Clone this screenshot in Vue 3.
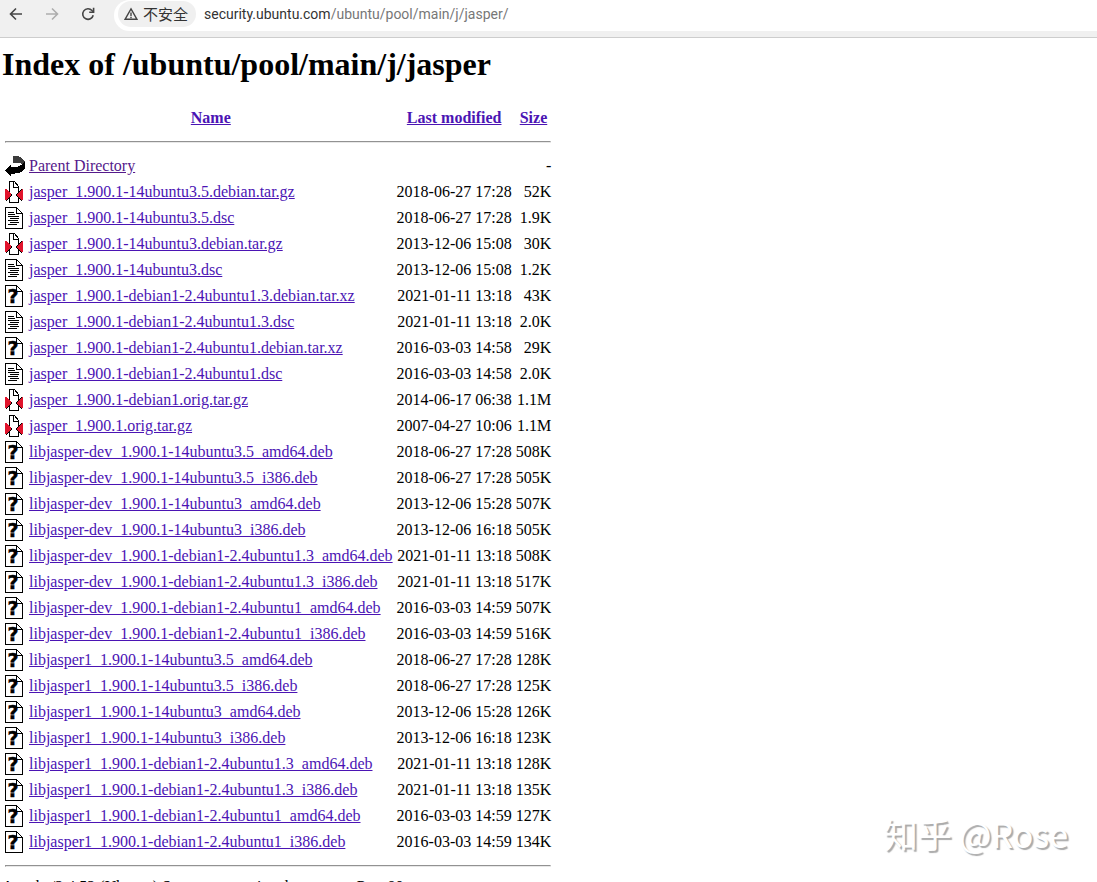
<template>
  <div class="browser">
    <header class="toolbar">
      <button class="nav-btn" type="button" aria-label="Back">
        <svg width="16" height="16" viewBox="0 0 16 16"><path d="M14 8H3M8 2.5L2.5 8L8 13.5" /></svg>
      </button>
      <button class="nav-btn disabled" type="button" aria-label="Forward">
        <svg width="16" height="16" viewBox="0 0 16 16"><path d="M2 8H13M8 2.5L13.5 8L8 13.5" /></svg>
      </button>
      <button class="nav-btn" type="button" aria-label="Reload">
        <svg width="16" height="16" viewBox="0 0 16 16">
          <path d="M13.2 9.2A5.3 5.3 0 1 1 12 4.5L13.5 6" />
          <path d="M13.6 1.8V6.2H9.2" />
        </svg>
      </button>
      <div class="address-bar">
        <button class="security" type="button">
          <svg width="14" height="14" viewBox="0 0 14 14">
            <path d="M7 1.8L13 12.3H1Z" />
            <path d="M7 5.4V9M7 9.8V11.2" />
          </svg>
          <span>不安全</span>
        </button>
        <div class="url"><span class="host">security.ubuntu.com</span>/ubuntu/pool/main/j/jasper/</div>
      </div>
    </header>

    <main class="page">
      <h1>Index of /ubuntu/pool/main/j/jasper</h1>
      <table>
        <thead>
          <tr>
            <th class="icon"></th>
            <th><a href="#">Name</a></th>
            <th><a href="#">Last modified</a></th>
            <th><a href="#">Size</a></th>
          </tr>
          <tr>
            <td colspan="4"><hr /></td>
          </tr>
        </thead>
        <tbody>
          <tr v-for="file in files" :key="file.name">
            <td class="icon">
              <!-- parent directory -->
              <svg v-if="file.type === 'back'" width="20" height="22" viewBox="0 0 20 22">
                <path class="back-top" d="M8 1H13L17 3L20 7V10L17 9L14 8H8Z" />
                <path class="solid" d="M20 7V13L18 16L14 18L6 19V21H5L0 16V15L5 10H6V12H12L16 10L18 8Z" />
              </svg>
              <!-- compressed archive -->
              <svg v-else-if="file.type === 'gz'" width="20" height="22" viewBox="0 0 20 22">
                <path class="sheet" d="M4.5 0.5H9.5L13.5 5.5V21.5H4.5Z" />
                <path class="fold" d="M8.5 0.5V6.5H13.5" />
                <path class="solid" d="M1 8L7 13V15L1 20ZM17 8L11 13V15L17 20Z" />
                <path class="red" d="M0 8H1L6 13V15L1 19H0ZM18 8H17L12 13V15L17 19H18Z" />
              </svg>
              <!-- text file or unknown file -->
              <svg v-else width="20" height="22" viewBox="0 0 20 22">
                <path class="sheet" d="M0.5 0.5H11.5L17.5 6.5V21.5H0.5Z" />
                <path class="fold" d="M11.5 0.5V6.5H17.5" />
                <path v-if="file.type === 'text'" class="lines"
                  d="M3 5.5H9M3 7.5H10M3 9.5H14M5 11.5H14M3 13.5H13M5 15.5H14M3 17.5H12" />
                <text v-else x="8" y="18" text-anchor="middle">?</text>
              </svg>
            </td>
            <td><a href="#" :class="{ parent: file.type === 'back' }">{{ file.name }}</a></td>
            <td class="right">{{ file.modified }}</td>
            <td class="right">{{ file.size }}</td>
          </tr>
        </tbody>
        <tfoot>
          <tr>
            <td colspan="4"><hr /></td>
          </tr>
        </tfoot>
      </table>
      <address>Apache/2.4.52 (Ubuntu) Server at security.ubuntu.com Port 80</address>
    </main>

    <div class="watermark">知乎 @Rose</div>
  </div>
</template>

<script setup>
// Directory listing entries
const files = [
  { type: 'back', name: 'Parent Directory', modified: '', size: '-' },
  { type: 'gz', name: 'jasper_1.900.1-14ubuntu3.5.debian.tar.gz', modified: '2018-06-27 17:28', size: '52K' },
  { type: 'text', name: 'jasper_1.900.1-14ubuntu3.5.dsc', modified: '2018-06-27 17:28', size: '1.9K' },
  { type: 'gz', name: 'jasper_1.900.1-14ubuntu3.debian.tar.gz', modified: '2013-12-06 15:08', size: '30K' },
  { type: 'text', name: 'jasper_1.900.1-14ubuntu3.dsc', modified: '2013-12-06 15:08', size: '1.2K' },
  { type: 'unknown', name: 'jasper_1.900.1-debian1-2.4ubuntu1.3.debian.tar.xz', modified: '2021-01-11 13:18', size: '43K' },
  { type: 'text', name: 'jasper_1.900.1-debian1-2.4ubuntu1.3.dsc', modified: '2021-01-11 13:18', size: '2.0K' },
  { type: 'unknown', name: 'jasper_1.900.1-debian1-2.4ubuntu1.debian.tar.xz', modified: '2016-03-03 14:58', size: '29K' },
  { type: 'text', name: 'jasper_1.900.1-debian1-2.4ubuntu1.dsc', modified: '2016-03-03 14:58', size: '2.0K' },
  { type: 'gz', name: 'jasper_1.900.1-debian1.orig.tar.gz', modified: '2014-06-17 06:38', size: '1.1M' },
  { type: 'gz', name: 'jasper_1.900.1.orig.tar.gz', modified: '2007-04-27 10:06', size: '1.1M' },
  { type: 'unknown', name: 'libjasper-dev_1.900.1-14ubuntu3.5_amd64.deb', modified: '2018-06-27 17:28', size: '508K' },
  { type: 'unknown', name: 'libjasper-dev_1.900.1-14ubuntu3.5_i386.deb', modified: '2018-06-27 17:28', size: '505K' },
  { type: 'unknown', name: 'libjasper-dev_1.900.1-14ubuntu3_amd64.deb', modified: '2013-12-06 15:28', size: '507K' },
  { type: 'unknown', name: 'libjasper-dev_1.900.1-14ubuntu3_i386.deb', modified: '2013-12-06 16:18', size: '505K' },
  { type: 'unknown', name: 'libjasper-dev_1.900.1-debian1-2.4ubuntu1.3_amd64.deb', modified: '2021-01-11 13:18', size: '508K' },
  { type: 'unknown', name: 'libjasper-dev_1.900.1-debian1-2.4ubuntu1.3_i386.deb', modified: '2021-01-11 13:18', size: '517K' },
  { type: 'unknown', name: 'libjasper-dev_1.900.1-debian1-2.4ubuntu1_amd64.deb', modified: '2016-03-03 14:59', size: '507K' },
  { type: 'unknown', name: 'libjasper-dev_1.900.1-debian1-2.4ubuntu1_i386.deb', modified: '2016-03-03 14:59', size: '516K' },
  { type: 'unknown', name: 'libjasper1_1.900.1-14ubuntu3.5_amd64.deb', modified: '2018-06-27 17:28', size: '128K' },
  { type: 'unknown', name: 'libjasper1_1.900.1-14ubuntu3.5_i386.deb', modified: '2018-06-27 17:28', size: '125K' },
  { type: 'unknown', name: 'libjasper1_1.900.1-14ubuntu3_amd64.deb', modified: '2013-12-06 15:28', size: '126K' },
  { type: 'unknown', name: 'libjasper1_1.900.1-14ubuntu3_i386.deb', modified: '2013-12-06 16:18', size: '123K' },
  { type: 'unknown', name: 'libjasper1_1.900.1-debian1-2.4ubuntu1.3_amd64.deb', modified: '2021-01-11 13:18', size: '128K' },
  { type: 'unknown', name: 'libjasper1_1.900.1-debian1-2.4ubuntu1.3_i386.deb', modified: '2021-01-11 13:18', size: '135K' },
  { type: 'unknown', name: 'libjasper1_1.900.1-debian1-2.4ubuntu1_amd64.deb', modified: '2016-03-03 14:59', size: '127K' },
  { type: 'unknown', name: 'libjasper1_1.900.1-debian1-2.4ubuntu1_i386.deb', modified: '2016-03-03 14:59', size: '134K' },
];
</script>

<style>
body {
  margin: 0;
  background: #fff;
}
</style>

<style scoped>
.browser {
  position: relative;
  height: 100vh;
  overflow: hidden;
  font-family: "Liberation Serif", "Times New Roman", serif;
  font-size: 16px;
  line-height: 18px;
  color: #000;
}

.toolbar {
  display: flex;
  align-items: flex-start;
  gap: 20px;
  box-sizing: border-box;
  height: 38px;
  padding-left: 8px;
  background: #f0f0f0;
  border-bottom: 1px solid #cdcdcd;
}

.nav-btn {
  display: flex;
  padding: 6px 0;
  border: 0;
  background: none;
}

.nav-btn svg {
  fill: none;
  stroke: #454545;
  stroke-width: 1.6;
}

.nav-btn.disabled svg {
  stroke: #adadad;
}

.address-bar {
  display: flex;
  flex: 1;
  align-items: center;
  gap: 8px;
  height: 31px;
  margin-left: -2px;
  padding-left: 4px;
  box-sizing: border-box;
  border-radius: 16px 0 0 16px;
  background: #fff;
}

.security {
  display: flex;
  align-items: center;
  gap: 5px;
  height: 26px;
  margin-bottom: 3px;
  padding: 0 8px 0 6px;
  border: 0;
  border-radius: 13px;
  background: #f0f0f0;
  color: #333;
  font-family: "Noto Sans CJK SC", sans-serif;
  font-size: 15px;
  line-height: 20px;
}

.security svg {
  fill: none;
  stroke: #444;
  stroke-width: 1.4;
}

.url {
  margin-bottom: 3px;
  font-family: Roboto, sans-serif;
  font-size: 14px;
  line-height: 20px;
  color: #777;
}

.host {
  color: #333;
}

.page {
  padding: 8px 2px 0;
}

h1 {
  margin: 0 0 21px;
  font-size: 32px;
  line-height: 37px;
}

table {
  border-collapse: separate;
  border-spacing: 2px;
}

th,
td {
  padding: 1px;
  height: 18px;
  white-space: nowrap;
}

.icon {
  width: 20px;
  height: 22px;
}

.icon svg {
  display: block;
  shape-rendering: crispEdges;
}

.right {
  text-align: right;
}

hr {
  margin: 8px 0;
  border: 1px solid;
  border-color: #929292 #e8e8e8 #e8e8e8 #929292;
}

a {
  color: #4b14b4;
}

a.parent {
  color: #551a8b;
}

address {
  font-style: normal;
}

.sheet {
  fill: #fff;
  stroke: #000;
}

.fold {
  fill: none;
  stroke: #000;
}

.lines {
  stroke: #000;
}

.solid {
  fill: #000;
}

.red {
  fill: #e0142c;
}

.back-top {
  fill: #3c3c3c;
}

.icon text {
  font-family: "DejaVu Sans", sans-serif;
  font-size: 19px;
  font-weight: bold;
  stroke: #000;
  stroke-width: 0.5;
}

.watermark {
  position: absolute;
  right: 29px;
  bottom: 26px;
  font-family: "Noto Sans CJK SC", sans-serif;
  font-size: 34px;
  line-height: 44px;
  color: #fff;
  text-shadow: 2px 2px 1px #aaa;
}
</style>
